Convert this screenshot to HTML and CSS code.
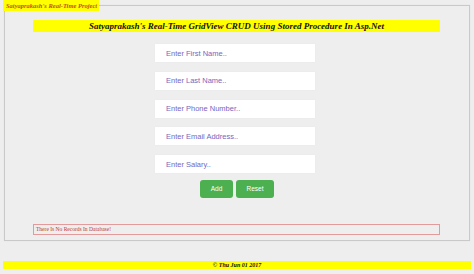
FILE: index.html
```html
<!DOCTYPE html>
<html>
<head>
<meta charset="utf-8">
<link rel="stylesheet" href="styles.css">
</head>
<body>
<fieldset class="panel">
  <legend class="legend">Satyaprakash's Real-Time Project</legend>
  <div class="title">Satyaprakash's Real-Time GridView CRUD Using Stored Procedure In Asp.Net</div>
  <div class="form">
    <input class="field" type="text" placeholder="Enter First Name..">
    <input class="field" type="text" placeholder="Enter Last Name..">
    <input class="field" type="text" placeholder="Enter Phone Number..">
    <input class="field" type="text" placeholder="Enter Email Address..">
    <input class="field" type="text" placeholder="Enter Salary..">
    <div class="buttons">
      <button class="btn btn-add">Add</button>
      <button class="btn btn-reset">Reset</button>
    </div>
  </div>
  <div class="notice">There Is No Records In Database!</div>
</fieldset>
<div class="footer">© Thu Jun 01 2017</div>
</body>
</html>
```
FILE: styles.css
```css
html, body {
  margin: 0;
  padding: 0;
  background: #eeeeee;
  font-family: "Liberation Serif", "Times New Roman", serif;
}
.panel {
  margin: 0 4px 0 4px;
  padding: 0 0 5px 0;
  border: 1px solid #c9c9c9;
  box-shadow: 0 0 1px #d8d8d8;
  min-width: 0;
}
.legend {
  margin-left: -2px;
  padding: 0 2px 0 3px;
  background: #ffff00;
  color: #c0501a;
  font-style: italic;
  font-weight: bold;
  font-size: 6.5px;
  line-height: 11px;
  height: 11px;
  white-space: nowrap;
  box-sizing: border-box;
}
.title {
  margin: 9px 29px 0 28px;
  height: 12px;
  line-height: 12px;
  background: #ffff00;
  color: #111;
  text-align: center;
  font-weight: bold;
  font-style: italic;
  font-size: 9px;
}
.form {
  display: flex;
  flex-direction: column;
  align-items: center;
  gap: 9.75px;
  margin-top: 12px;
}
.field {
  display: block;
  box-sizing: border-box;
  width: 160px;
  height: 18px;
  margin: 0 4px 0 0;
  padding: 0 0 0 11px;
  border: none;
  background: #ffffff;
  box-shadow: 0 0 1px #e0e0e0;
  font-family: "Liberation Sans", Arial, sans-serif;
  font-size: 7.5px;
  color: #6f62bf;
  outline: none;
}
.field::placeholder {
  color: #7468c2;
  opacity: 1;
}
.buttons {
  display: flex;
  gap: 3px;
  margin-top: -3px;
}
.btn {
  height: 18px;
  border: none;
  border-radius: 3px;
  background: #4caf50;
  color: #ffffff;
  font-family: "Liberation Sans", Arial, sans-serif;
  font-size: 6.5px;
  padding: 0;
}
.btn-add { width: 33px; }
.btn-reset { width: 38px; }
.notice {
  margin: 26px 29px 0 28px;
  height: 11px;
  box-sizing: border-box;
  border: 1px solid #e39a9a;
  color: #c0392b;
  font-size: 5.5px;
  line-height: 9px;
  padding-left: 2px;
}
.footer {
  margin: 20px 3px 0 3px;
  height: 8px;
  line-height: 8px;
  background: #ffff00;
  color: #111;
  text-align: center;
  font-weight: bold;
  font-style: italic;
  font-size: 6px;
}
```
